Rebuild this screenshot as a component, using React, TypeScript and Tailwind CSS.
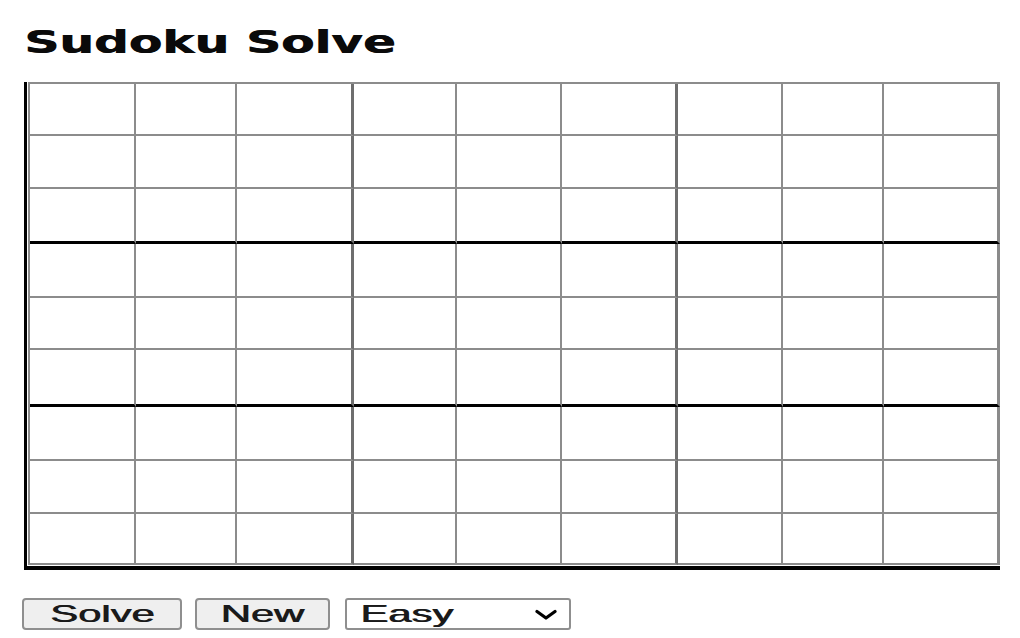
const COLS = [0, 1, 2, 3, 4, 5, 6, 7, 8];
const ROWS = [0, 1, 2, 3, 4, 5, 6, 7, 8];

function cellClass(r: number, c: number) {
  const right =
    c === 2 || c === 5
      ? 'border-r-[3px] border-r-[#6e6e6e]'
      : c === 8
        ? 'border-r-[3px] border-r-[#8a8a8a]'
        : 'border-r-2 border-r-[#8c8c8c]';
  const bottom = r === 2 || r === 5 ? 'border-b-[3px] border-b-black' : 'border-b-2 border-b-[#8c8c8c]';
  return `bg-white ${right} ${bottom}`;
}

function Chevron() {
  return (
    <svg width="22" height="12" viewBox="0 0 22 12" fill="none" className="mt-[2px]">
      <polyline points="2,2.5 11,9 20,2.5" stroke="#000" strokeWidth="3.2" strokeLinecap="round" strokeLinejoin="round" />
    </svg>
  );
}

export default function App() {
  return (
    <div className="min-h-[638px] w-[1020px] bg-white pl-[22px] pt-[26px] font-['Liberation_Sans',Arial,sans-serif] text-black">
      <h1 className="ml-[2px] h-[32px] whitespace-nowrap font-['DejaVu_Sans',Verdana,sans-serif] text-[32px] font-bold leading-[32px] text-[#0a0a0a]">
        <span className="inline-block origin-left scale-x-[1.52] [text-shadow:0.6px_0_0_#0a0a0a]">Sudoku Solve</span>
      </h1>

      <div className="ml-[2px] mt-[24px] w-fit border-b-[4px] border-l-[3px] border-black pb-px pl-px">
        <div className="grid grid-cols-[106px_101px_117px_103px_105px_116px_105px_101px_116px] grid-rows-[52px_53px_55px_54px_52px_57px_54px_53px_51px] border-l-2 border-t-2 border-[#8c8c8c]">
          {ROWS.map((r) => COLS.map((c) => <div key={`${r}-${c}`} className={cellClass(r, c)} />))}
        </div>
      </div>

      <div className="mt-[28px] flex items-center">
        <button className="flex h-[32px] w-[160px] items-center justify-center rounded-[4px] border-2 border-[#8f8f8f] bg-[#efefef] text-[24px] leading-none text-[#1a1a1a]">
          <span className="inline-block scale-x-[1.74] [text-shadow:0.7px_0_0_#1a1a1a]">Solve</span>
        </button>
        <button className="ml-[13px] flex h-[32px] w-[135px] items-center justify-center rounded-[4px] border-2 border-[#8f8f8f] bg-[#efefef] text-[24px] leading-none text-[#1a1a1a]">
          <span className="inline-block scale-x-[1.74] [text-shadow:0.7px_0_0_#1a1a1a]">New</span>
        </button>
        <div
          role="combobox"
          className="ml-[15px] flex h-[32px] w-[226px] items-center justify-between rounded-[3px] border-2 border-[#8f8f8f] bg-white pl-[13px] pr-[12px] text-[24px] leading-none text-[#1a1a1a]"
        >
          <span className="inline-block origin-left scale-x-[1.74] [text-shadow:0.7px_0_0_#1a1a1a]">Easy</span>
          <Chevron />
        </div>
      </div>
    </div>
  );
}
